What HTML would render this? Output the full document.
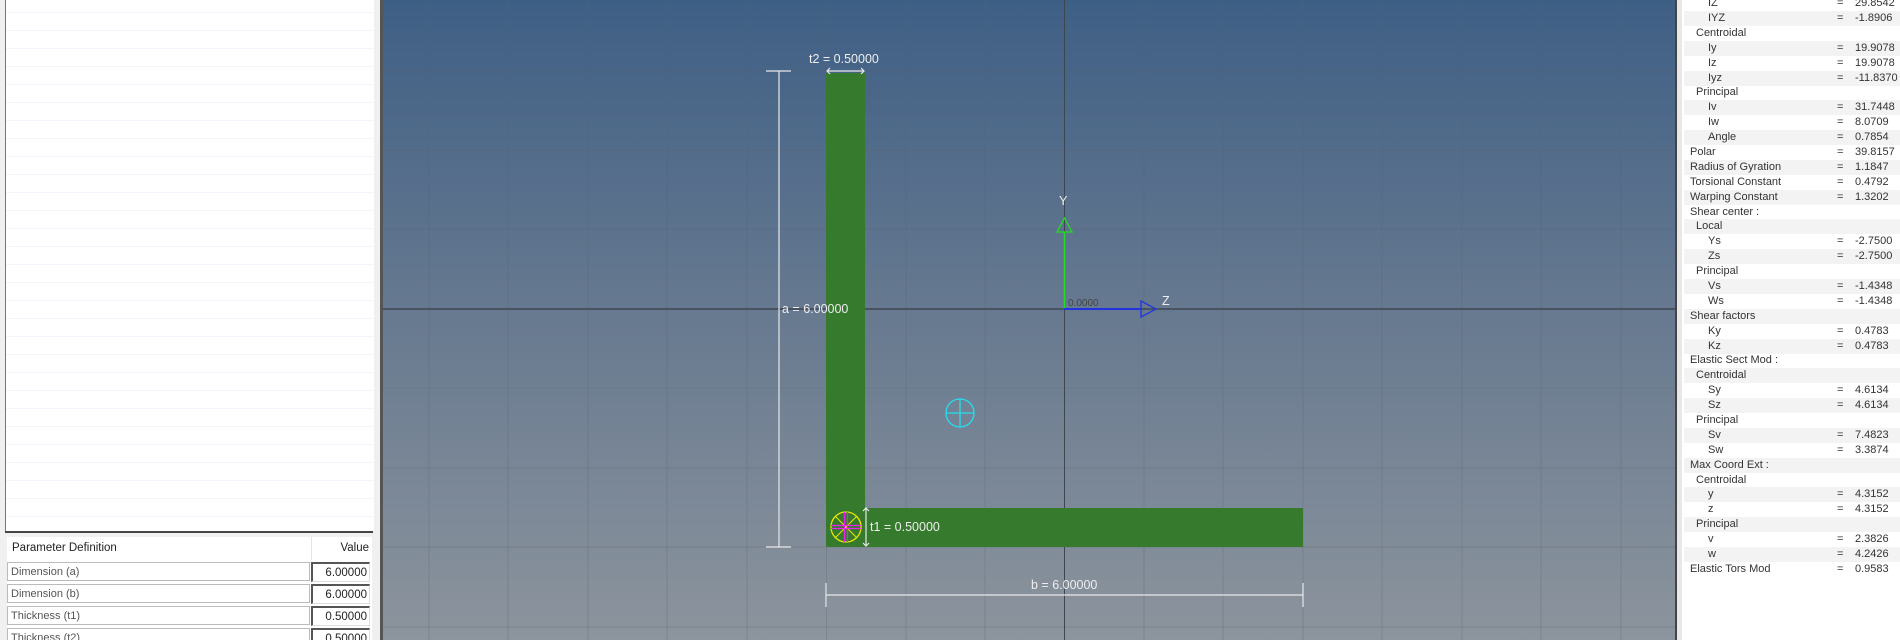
<!DOCTYPE html>
<html style="overflow:hidden;background:#8c949d"><head><meta charset="utf-8"><style>
body{margin:0;width:1900px;height:640px;overflow:hidden;background:#f0f0f0;font-family:"Liberation Sans",sans-serif;position:relative}
.abs{position:absolute}
#left{left:0;top:0;width:380px;height:640px;background:#f0f0f0}
#list{left:5px;top:0;width:368px;height:531px;background:#fff;border-left:1px solid #777;
background-image:repeating-linear-gradient(to bottom,transparent 0,transparent 12px,#f0f6fc 12px,#f0f6fc 13px,transparent 13px,transparent 18px);}
#sep{left:5px;top:531px;width:368px;height:2px;background:#444}
#tbl{left:7px;top:537px;width:365px;height:103px;background:#fff}
.th{position:absolute;top:0;height:23px;font-size:11.5px;line-height:23px;color:#222;background:#fff}
.row{position:absolute;left:0;width:303px;height:19px;border:1px solid #bbb;font-size:11px;line-height:19px;color:#555;padding-left:3px;box-sizing:border-box;background:#fff}
.val{position:absolute;left:304px;width:59px;height:20px;border-top:2px solid #555;border-left:2px solid #555;border-right:1px solid #ddd;border-bottom:1px solid #ddd;box-sizing:border-box;font-size:11.5px;line-height:18px;text-align:right;padding-right:2px;color:#222;background:#fff}
#vbar{left:380px;top:0;width:3px;height:640px;background:#555}
#right{left:1677px;top:0;width:223px;height:640px;background:#fff}
#rb1{left:1675px;top:0;width:2px;height:640px;background:#444}
#rb2{left:1677px;top:0;width:5px;height:640px;background:#e8e8e8}
.r{position:absolute;left:1684px;width:216px;height:15px;font-size:11px;line-height:15px;color:#333;white-space:nowrap}
.r.g{background:#f3f3f3}
.r span.e{position:absolute;left:153px}
.r span.v{position:absolute;left:171px}
</style></head><body>
<div id="left" class="abs"></div>
<div id="list" class="abs"></div>
<div id="sep" class="abs"></div>
<div id="tbl" class="abs">
<div class="th" style="left:5px;width:290px">Parameter Definition</div>
<div class="th" style="left:304px;width:57px;text-align:right;border-left:1px solid #e4e4e4">Value</div>
<div class="row" style="top:25px">Dimension (a)</div><div class="val" style="top:25px">6.00000</div>
<div class="row" style="top:47px">Dimension (b)</div><div class="val" style="top:47px">6.00000</div>
<div class="row" style="top:69px">Thickness (t1)</div><div class="val" style="top:69px">0.50000</div>
<div class="row" style="top:91px">Thickness (t2)</div><div class="val" style="top:91px">0.50000</div>
</div>
<div id="vbar" class="abs"></div>
<svg class="abs" style="left:383px;top:0" width="1292" height="640" viewBox="383 0 1292 640">
<defs><linearGradient id="bg" x1="0" y1="0" x2="0" y2="1">
<stop offset="0" stop-color="#3e5f85"/><stop offset="0.5" stop-color="#687a90"/><stop offset="1" stop-color="#8c949d"/></linearGradient></defs>
<rect x="383" y="0" width="1292" height="640" fill="url(#bg)"/>
<g stroke="#56606c" stroke-opacity="0.28" stroke-width="1">
<line x1="429" y1="0" x2="429" y2="640"/><line x1="508" y1="0" x2="508" y2="640"/><line x1="588" y1="0" x2="588" y2="640"/><line x1="667" y1="0" x2="667" y2="640"/><line x1="747" y1="0" x2="747" y2="640"/><line x1="826.5" y1="0" x2="826.5" y2="640"/><line x1="906" y1="0" x2="906" y2="640"/><line x1="985" y1="0" x2="985" y2="640"/><line x1="1144" y1="0" x2="1144" y2="640"/><line x1="1223" y1="0" x2="1223" y2="640"/><line x1="1303" y1="0" x2="1303" y2="640"/><line x1="1382" y1="0" x2="1382" y2="640"/><line x1="1462" y1="0" x2="1462" y2="640"/><line x1="1541" y1="0" x2="1541" y2="640"/><line x1="1621" y1="0" x2="1621" y2="640"/>
<line x1="383" y1="70.5" x2="1675" y2="70.5"/><line x1="383" y1="150" x2="1675" y2="150"/><line x1="383" y1="229" x2="1675" y2="229"/><line x1="383" y1="388" x2="1675" y2="388"/><line x1="383" y1="468" x2="1675" y2="468"/><line x1="383" y1="547" x2="1675" y2="547"/><line x1="383" y1="627" x2="1675" y2="627"/>
</g>
<line x1="1064.5" y1="0" x2="1064.5" y2="640" stroke="#3e4650" stroke-width="1"/>
<line x1="383" y1="309" x2="1675" y2="309" stroke="#3e4650" stroke-width="1.5"/>
<rect x="826" y="73" width="39" height="474" fill="#367a2e"/>
<rect x="865" y="508" width="438" height="39" fill="#367a2e"/>
<g stroke="#e8e8e8" stroke-width="1.2" fill="none">
<line x1="779" y1="71" x2="779" y2="547"/><line x1="766" y1="71" x2="791" y2="71"/><line x1="766" y1="547" x2="791" y2="547"/>
<line x1="827" y1="71" x2="864" y2="71"/><path d="M830 68 L827 71 L830 74 M861 68 L864 71 L861 74"/>
<line x1="866" y1="508" x2="866" y2="546"/><path d="M863 511 L866 508 L869 511 M863 543 L866 546 L869 543"/>
<line x1="826" y1="595" x2="1303" y2="595"/><line x1="826" y1="583" x2="826" y2="607"/><line x1="1303" y1="583" x2="1303" y2="607"/>
</g>
<g font-family="Liberation Sans,sans-serif" font-size="12.5" fill="#eeeeee">
<text x="809" y="63">t2 = 0.50000</text>
<text x="782" y="313">a = 6.00000</text>
<text x="870" y="531">t1 = 0.50000</text>
<text x="1031" y="589">b = 6.00000</text>
<text x="1059" y="205">Y</text>
<text x="1162" y="305">Z</text>
</g>
<text x="1068" y="306" font-family="Liberation Sans,sans-serif" font-size="10" fill="#444">0.0000</text>
<line x1="1064.5" y1="309" x2="1064.5" y2="232" stroke="#22dd22" stroke-width="1.5"/>
<path d="M1057 232 L1064.5 218 L1072 232 Z" fill="none" stroke="#22dd22" stroke-width="1.3"/>
<line x1="1064" y1="309" x2="1141" y2="309" stroke="#2233dd" stroke-width="2"/>
<path d="M1141 301 L1156 309 L1141 317 Z" fill="none" stroke="#2233dd" stroke-width="1.3"/>
<g stroke="#22e0f0" stroke-width="1.3" fill="none"><circle cx="960" cy="413" r="14"/><line x1="946" y1="413" x2="974" y2="413"/><line x1="960" y1="399" x2="960" y2="427"/></g>
<g fill="none"><circle cx="846" cy="527" r="15" stroke="#e8e800" stroke-width="1.3"/>
<path d="M835 516 L857 538 M857 516 L835 538" stroke="#e8e800" stroke-width="1"/>
<path d="M831 525.5 H861 M831 528.5 H861 M844.5 512 V542 M847.5 512 V542" stroke="#ee22ee" stroke-width="1.2"/></g>
</svg>
<div id="right" class="abs"></div>
<div id="rb1" class="abs"></div>
<div id="rb2" class="abs"></div>
<div class="r" style="top:-4px;padding-left:24px">IZ<span class="e">=</span><span class="v">29.8542</span></div>
<div class="r g" style="top:11px;padding-left:24px">IYZ<span class="e">=</span><span class="v">-1.8906</span></div>
<div class="r" style="top:26px;padding-left:12px">Centroidal</div>
<div class="r g" style="top:41px;padding-left:24px">Iy<span class="e">=</span><span class="v">19.9078</span></div>
<div class="r" style="top:56px;padding-left:24px">Iz<span class="e">=</span><span class="v">19.9078</span></div>
<div class="r g" style="top:71px;padding-left:24px">Iyz<span class="e">=</span><span class="v">-11.8370</span></div>
<div class="r" style="top:85px;padding-left:12px">Principal</div>
<div class="r g" style="top:100px;padding-left:24px">Iv<span class="e">=</span><span class="v">31.7448</span></div>
<div class="r" style="top:115px;padding-left:24px">Iw<span class="e">=</span><span class="v">8.0709</span></div>
<div class="r g" style="top:130px;padding-left:24px">Angle<span class="e">=</span><span class="v">0.7854</span></div>
<div class="r" style="top:145px;padding-left:6px">Polar<span class="e">=</span><span class="v">39.8157</span></div>
<div class="r g" style="top:160px;padding-left:6px">Radius of Gyration<span class="e">=</span><span class="v">1.1847</span></div>
<div class="r" style="top:175px;padding-left:6px">Torsional Constant<span class="e">=</span><span class="v">0.4792</span></div>
<div class="r g" style="top:190px;padding-left:6px">Warping Constant<span class="e">=</span><span class="v">1.3202</span></div>
<div class="r" style="top:205px;padding-left:6px">Shear center :</div>
<div class="r g" style="top:219px;padding-left:12px">Local</div>
<div class="r" style="top:234px;padding-left:24px">Ys<span class="e">=</span><span class="v">-2.7500</span></div>
<div class="r g" style="top:249px;padding-left:24px">Zs<span class="e">=</span><span class="v">-2.7500</span></div>
<div class="r" style="top:264px;padding-left:12px">Principal</div>
<div class="r g" style="top:279px;padding-left:24px">Vs<span class="e">=</span><span class="v">-1.4348</span></div>
<div class="r" style="top:294px;padding-left:24px">Ws<span class="e">=</span><span class="v">-1.4348</span></div>
<div class="r g" style="top:309px;padding-left:6px">Shear factors</div>
<div class="r" style="top:324px;padding-left:24px">Ky<span class="e">=</span><span class="v">0.4783</span></div>
<div class="r g" style="top:339px;padding-left:24px">Kz<span class="e">=</span><span class="v">0.4783</span></div>
<div class="r" style="top:353px;padding-left:6px">Elastic Sect Mod :</div>
<div class="r g" style="top:368px;padding-left:12px">Centroidal</div>
<div class="r" style="top:383px;padding-left:24px">Sy<span class="e">=</span><span class="v">4.6134</span></div>
<div class="r g" style="top:398px;padding-left:24px">Sz<span class="e">=</span><span class="v">4.6134</span></div>
<div class="r" style="top:413px;padding-left:12px">Principal</div>
<div class="r g" style="top:428px;padding-left:24px">Sv<span class="e">=</span><span class="v">7.4823</span></div>
<div class="r" style="top:443px;padding-left:24px">Sw<span class="e">=</span><span class="v">3.3874</span></div>
<div class="r g" style="top:458px;padding-left:6px">Max Coord Ext :</div>
<div class="r" style="top:473px;padding-left:12px">Centroidal</div>
<div class="r g" style="top:487px;padding-left:24px">y<span class="e">=</span><span class="v">4.3152</span></div>
<div class="r" style="top:502px;padding-left:24px">z<span class="e">=</span><span class="v">4.3152</span></div>
<div class="r g" style="top:517px;padding-left:12px">Principal</div>
<div class="r" style="top:532px;padding-left:24px">v<span class="e">=</span><span class="v">2.3826</span></div>
<div class="r g" style="top:547px;padding-left:24px">w<span class="e">=</span><span class="v">4.2426</span></div>
<div class="r" style="top:562px;padding-left:6px">Elastic Tors Mod<span class="e">=</span><span class="v">0.9583</span></div>
</body></html>
